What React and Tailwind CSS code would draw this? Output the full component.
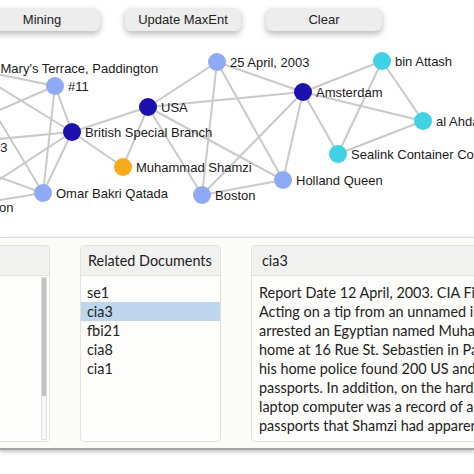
import React from "react";

const LB = "#8eaaf6";
const DB = "#1c10b0";
const OR = "#f6aa1c";
const CY = "#3ed2e4";

const nodes = {
  mary: { x: -32, y: 68, c: LB, label: "St. Mary's Terrace, Paddington" },
  n11: { x: 55, y: 86, c: LB, label: "#11" },
  apr25: { x: 217, y: 62, c: LB, label: "25 April, 2003" },
  attash: { x: 382, y: 61, c: CY, label: "bin Attash" },
  usa: { x: 148, y: 107, c: DB, label: "USA" },
  ams: { x: 303, y: 92, c: DB, label: "Amsterdam" },
  bsb: { x: 72, y: 132, c: DB, label: "British Special Branch" },
  ahd: { x: 423, y: 121, c: CY, label: "al Ahdal" },
  d12: { x: -85, y: 147, c: LB, label: "12 April, 2003" },
  sealink: { x: 338, y: 154, c: CY, label: "Sealink Container Company" },
  shamzi: { x: 123, y: 167, c: OR, label: "Muhammad Shamzi" },
  holland: { x: 283, y: 180, c: LB, label: "Holland Queen" },
  omar: { x: 43, y: 193, c: LB, label: "Omar Bakri Qatada" },
  boston: { x: 202, y: 195, c: LB, label: "Boston" },
  london: { x: -43, y: 207, c: LB, label: "London" },
};

const edges = [
  ["mary", "n11"], ["mary", "bsb"], ["mary", "omar"],
  ["d12", "n11"], ["d12", "bsb"], ["d12", "omar"],
  ["london", "bsb"], ["london", "omar"],
  ["n11", "bsb"], ["n11", "omar"], ["bsb", "omar"],
  ["bsb", "usa"], ["bsb", "shamzi"],
  ["usa", "apr25"], ["usa", "ams"], ["usa", "shamzi"], ["usa", "boston"], ["usa", "holland"],
  ["apr25", "ams"], ["apr25", "boston"], ["apr25", "holland"],
  ["ams", "boston"], ["ams", "holland"], ["boston", "holland"],
  ["ams", "attash"], ["ams", "ahd"], ["ams", "sealink"],
  ["attash", "ahd"], ["attash", "sealink"], ["sealink", "ahd"],
];

const docs = ["se1", "cia3", "fbi21", "cia8", "cia1"];

const report = [
  "Report Date 12 April, 2003. CIA Field Report.",
  "Acting on a tip from an unnamed informant, police",
  "arrested an Egyptian named Muhammad Shamzi at his",
  "home at 16 Rue St. Sebastien in Paris. In a search of",
  "his home police found 200 US and Canadian blank",
  "passports. In addition, on the hard drive of Shamzi's",
  "laptop computer was a record of a list of the",
  "passports that Shamzi had apparently sold.",
];

function Button({ children }) {
  return (
    <button className="w-[116px] h-[23px] rounded-[6px] bg-[#ededed] text-[13px] text-[#222] shadow-[0_3px_6px_rgba(0,0,0,0.28)] font-['Liberation_Sans',Arial,sans-serif]">
      {children}
    </button>
  );
}

function Graph() {
  return (
    <svg width="474" height="200" viewBox="0 37 474 200" className="block">
      {edges.map(([a, b], i) => (
        <line
          key={i}
          x1={nodes[a].x}
          y1={nodes[a].y}
          x2={nodes[b].x}
          y2={nodes[b].y}
          stroke="#c9c9c9"
          strokeWidth="2"
        />
      ))}
      {Object.entries(nodes).map(([id, n]) => (
        <g key={id}>
          <circle cx={n.x} cy={n.y} r="9" fill={n.c} />
          <text
            x={n.x + 13}
            y={n.y}
            dy="0.36em"
            fontSize="13"
            fill="#1a1a1a"
            fontFamily="'Liberation Sans', Arial, sans-serif"
          >
            {n.label}
          </text>
        </g>
      ))}
    </svg>
  );
}

export default function App() {
  return (
    <div className="w-[474px] h-[474px] overflow-hidden bg-white font-['Lato',sans-serif]">
      <div className="h-[37px] pt-[8px] flex gap-[25px] ml-[-16px]">
        <Button>Mining</Button>
        <Button>Update MaxEnt</Button>
        <Button>Clear</Button>
      </div>
      <Graph />
      <div className="h-[213px] border-t border-[#dcdcdc] border-b-2 border-b-[#a3a3a3] bg-[#fbfbf8] shadow-[0_2px_4px_rgba(0,0,0,0.25)] pt-[7px] flex">
        <div className="w-[60px] ml-[-10px] h-[197px] shrink-0 flex flex-col rounded-[4px] border border-[#e2e2de] bg-[#fdfdfb]">
          <div className="h-[30px] bg-[#f1f1ef] border-b border-[#e2e2de] rounded-t-[4px]" />
          <div className="flex-1 flex justify-end pr-[2px] pt-[1px] pb-[1px]">
            <div className="w-[6px] border border-[#e0e0e0] bg-[#f7f7f7] flex flex-col">
              <div className="h-[118px] bg-[#c2c2c2]" />
            </div>
          </div>
        </div>
        <div className="w-[141px] ml-[30px] h-[197px] shrink-0 flex flex-col rounded-[4px] border border-[#e2e2de] bg-[#fdfdfb]">
          <div className="h-[30px] bg-[#f1f1ef] border-b border-[#e2e2de] rounded-t-[4px] flex items-center pl-[7px] text-[14.4px] text-[#222]">
            Related Documents
          </div>
          <div className="pt-[7px]">
            {docs.map((d) => (
              <div
                key={d}
                className={`h-[19px] leading-[19px] pl-[6px] text-[14.4px] text-[#222] ${d === "cia3" ? "bg-[#bdd6ee]" : ""}`}
              >
                {d}
              </div>
            ))}
          </div>
        </div>
        <div className="w-[300px] ml-[30px] h-[197px] shrink-0 flex flex-col rounded-[4px] border border-[#e2e2de] bg-[#fdfdfb]">
          <div className="h-[30px] bg-[#f1f1ef] border-b border-[#e2e2de] rounded-t-[4px] flex items-center pl-[10px] text-[14.4px] text-[#222]">
            cia3
          </div>
          <div className="pt-[7px] pl-[7px]">
            {report.map((l, i) => (
              <div key={i} className="h-[19px] leading-[19px] whitespace-nowrap text-[14.4px] text-[#222]">
                {l}
              </div>
            ))}
          </div>
        </div>
      </div>
    </div>
  );
}
